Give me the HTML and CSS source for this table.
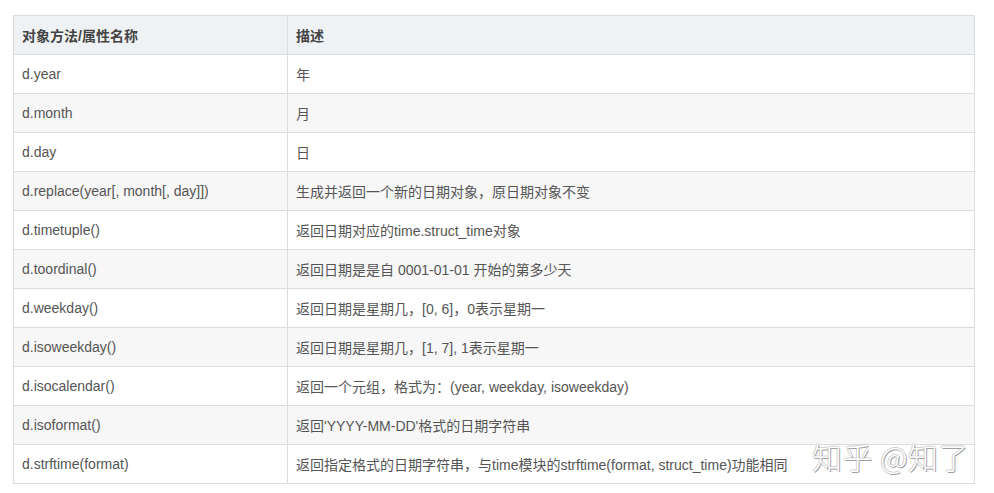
FILE: index.html
```html
<!DOCTYPE html>
<html>
<head>
<meta charset="utf-8">
<link rel="stylesheet" href="styles.css">
</head>
<body>
<div class="page">
  <table class="tbl">
    <thead>
      <tr><th class="c1">对象方法/属性名称</th><th>描述</th></tr>
    </thead>
    <tbody>
      <tr><td>d.year</td><td>年</td></tr>
      <tr><td>d.month</td><td>月</td></tr>
      <tr><td>d.day</td><td>日</td></tr>
      <tr><td>d.replace(year[, month[, day]])</td><td>生成并返回一个新的日期对象，原日期对象不变</td></tr>
      <tr><td>d.timetuple()</td><td>返回日期对应的time.struct_time对象</td></tr>
      <tr><td>d.toordinal()</td><td>返回日期是是自 0001-01-01 开始的第多少天</td></tr>
      <tr><td>d.weekday()</td><td>返回日期是星期几，[0, 6]，0表示星期一</td></tr>
      <tr><td>d.isoweekday()</td><td>返回日期是星期几，[1, 7], 1表示星期一</td></tr>
      <tr><td>d.isocalendar()</td><td>返回一个元组，格式为：(year, weekday, isoweekday)</td></tr>
      <tr><td>d.isoformat()</td><td>返回'YYYY-MM-DD'格式的日期字符串</td></tr>
      <tr><td>d.strftime(format)</td><td>返回指定格式的日期字符串，与time模块的strftime(format, struct_time)功能相同</td></tr>
    </tbody>
  </table>
  <div class="watermark">知乎 @知了</div>
</div>
</body>
</html>
```
FILE: styles.css
```css
html, body {
  margin: 0;
  padding: 0;
  background: #ffffff;
}
body {
  font-family: "Liberation Sans", "Noto Sans CJK SC", sans-serif;
  font-size: 14px;
  color: #555555;
}
.page {
  position: relative;
  padding: 15px 0 0 13px;
  width: 962px;
}
.tbl {
  border-collapse: collapse;
  width: 962px;
  table-layout: fixed;
}
.tbl th, .tbl td {
  border: 1px solid #dcdcdc;
  height: 39px;
  padding: 0 8px;
  text-align: left;
  vertical-align: middle;
  box-sizing: border-box;
  white-space: nowrap;
}
.tbl th {
  background: #eff2f5;
  font-weight: bold;
  color: #444444;
}
.tbl th.c1 {
  width: 274px;
}
.tbl tbody tr:nth-child(even) td {
  background: #f7f7f7;
}
.watermark {
  position: absolute;
  left: 812px;
  top: 434px;
  font-family: "Noto Sans CJK SC", sans-serif;
  font-size: 30px;
  font-weight: 300;
  color: #ffffff;
  text-shadow: 1px 1px 0 #a0a0a0, -1px 0 0 #d0d0d0, 0 -1px 0 #d0d0d0;
  letter-spacing: 0.5px;
  white-space: nowrap;
}
```
